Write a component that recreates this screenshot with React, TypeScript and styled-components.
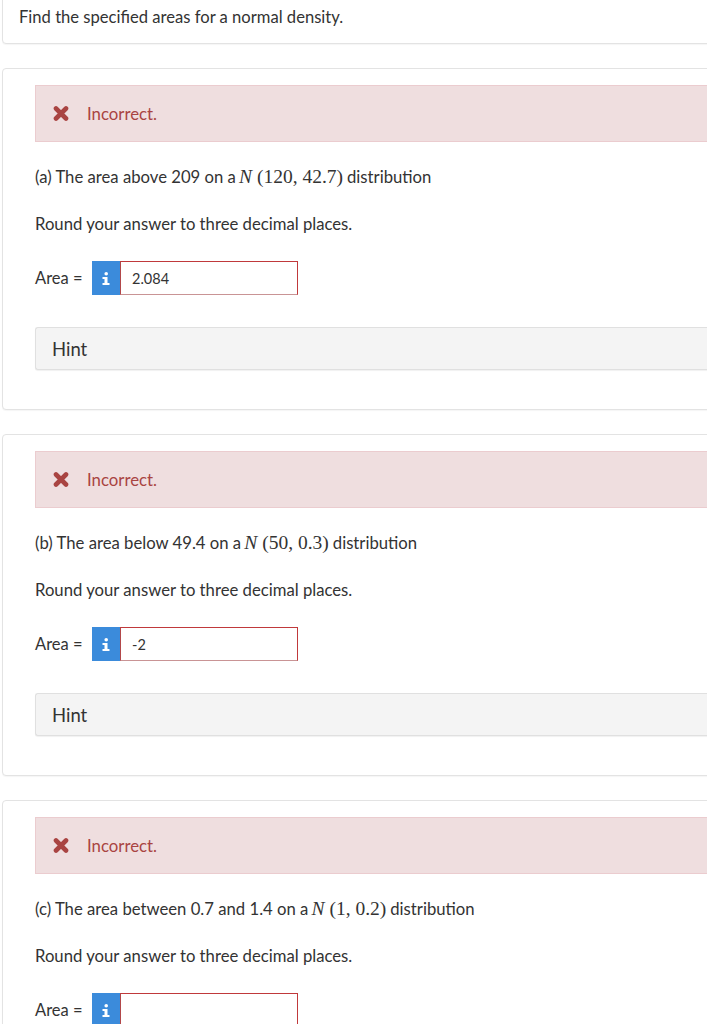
import styled, { createGlobalStyle } from "styled-components";

const GlobalStyle = createGlobalStyle`
  html, body {
    margin: 0;
    padding: 0;
    background: #fff;
    overflow-x: hidden;
  }
  body {
    font-family: Lato, "Open Sans", sans-serif;
    color: #333;
  }
`;

const Page = styled.div`
  width: 760px;
  padding-left: 2px;
  margin-top: -13px;
  display: flex;
  flex-direction: column;
  gap: 24px;
`;

const Panel = styled.div`
  border: 1px solid #e3e3e3;
  border-radius: 4px;
  background: #fff;
  box-shadow: 0 1px 1px rgba(0, 0, 0, 0.04);
`;

const Intro = styled(Panel)`
  padding: 18px 16px 15px 16px;
  font-size: 16.6px;
  line-height: 22px;
  color: #333;
`;

const Question = styled(Panel)`
  padding: 16px 0 39px 32px;
`;

const Alert = styled.div`
  display: flex;
  align-items: center;
  gap: 18px;
  height: 55px;
  padding-left: 17px;
  background: #efdedf;
  border: 1px solid #ebcccf;
  color: #a94442;
  font-size: 16.8px;
`;

const Para = styled.p`
  margin: 0;
  font-size: 16.7px;
  line-height: 24px;
  color: #333;
`;

const Prompt = styled(Para)`
  margin-top: 23px;
`;

const Instruction = styled(Para)`
  margin-top: 23px;
`;

const MathN = styled.span`
  font-family: "Liberation Serif", "DejaVu Serif", serif;
  font-style: italic;
  font-size: 19.5px;
  margin-left: 3px;
`;

const MathArgs = styled.span`
  font-family: "Liberation Serif", "DejaVu Serif", serif;
  font-size: 19.5px;
  margin: 0 4px 0 5px;
`;

const AnswerRow = styled.div`
  display: flex;
  align-items: center;
  margin-top: 25px;
  height: 34px;
`;

const Label = styled.span`
  font-size: 16.5px;
  width: 57px;
`;

const InfoButton = styled.span`
  width: 28px;
  height: 34px;
  background: #3b8bdb;
  display: flex;
  align-items: center;
  justify-content: center;
`;

const AnswerBox = styled.div`
  width: 165px;
  height: 32px;
  border: 1px solid #c0393b;
  border-bottom-color: #c99495;
  border-left-color: #b2474a;
  display: flex;
  align-items: center;
  padding-left: 11px;
  box-sizing: content-box;
  font-size: 14.5px;
  color: #333;
  font-family: Lato, "Liberation Sans", sans-serif;
`;

const Hint = styled.div`
  margin-top: 32px;
  height: 41px;
  display: flex;
  align-items: center;
  padding-left: 16px;
  background: #f4f4f4;
  border: 1px solid #e0e0e0;
  border-right: none;
  border-radius: 3px 0 0 3px;
  box-shadow: 0 1px 1px rgba(0, 0, 0, 0.06);
  font-size: 18.5px;
  color: #333;
`;

const CrossIcon = () => (
  <svg width="16" height="15" viewBox="0 0 16 15">
    <path d="M3 2.5 L13 12.5 M13 2.5 L3 12.5" stroke="#a94442" strokeWidth="4.6" strokeLinecap="round" />
  </svg>
);

const InfoIcon = () => (
  <svg width="8" height="13" viewBox="0 0 8 13">
    <circle cx="4.2" cy="1.8" r="1.8" fill="#fff" />
    <path d="M0.5 5 H5.5 V11 H7.5 V13 H0.5 V11 H2.5 V7 H0.5 Z" fill="#fff" />
  </svg>
);

interface QuestionData {
  letter: string;
  text: string;
  args: string;
  value: string;
}

const questions: QuestionData[] = [
  { letter: "a", text: "The area above 209 on a", args: "(120, 42.7)", value: "2.084" },
  { letter: "b", text: "The area below 49.4 on a", args: "(50, 0.3)", value: "-2" },
  { letter: "c", text: "The area between 0.7 and 1.4 on a", args: "(1, 0.2)", value: "" },
];

const App = () => (
  <>
    <GlobalStyle />
    <Page>
      <Intro>Find the specified areas for a normal density.</Intro>
      {questions.map(q => (
        <Question key={q.letter}>
          <Alert>
            <CrossIcon />
            <span>Incorrect.</span>
          </Alert>
          <Prompt>
            ({q.letter}) {q.text}
            <MathN>N</MathN>
            <MathArgs>{q.args}</MathArgs>
            distribution
          </Prompt>
          <Instruction>Round your answer to three decimal places.</Instruction>
          <AnswerRow>
            <Label>Area =</Label>
            <InfoButton>
              <InfoIcon />
            </InfoButton>
            <AnswerBox>{q.value}</AnswerBox>
          </AnswerRow>
          <Hint>Hint</Hint>
        </Question>
      ))}
    </Page>
  </>
);

export default App;
